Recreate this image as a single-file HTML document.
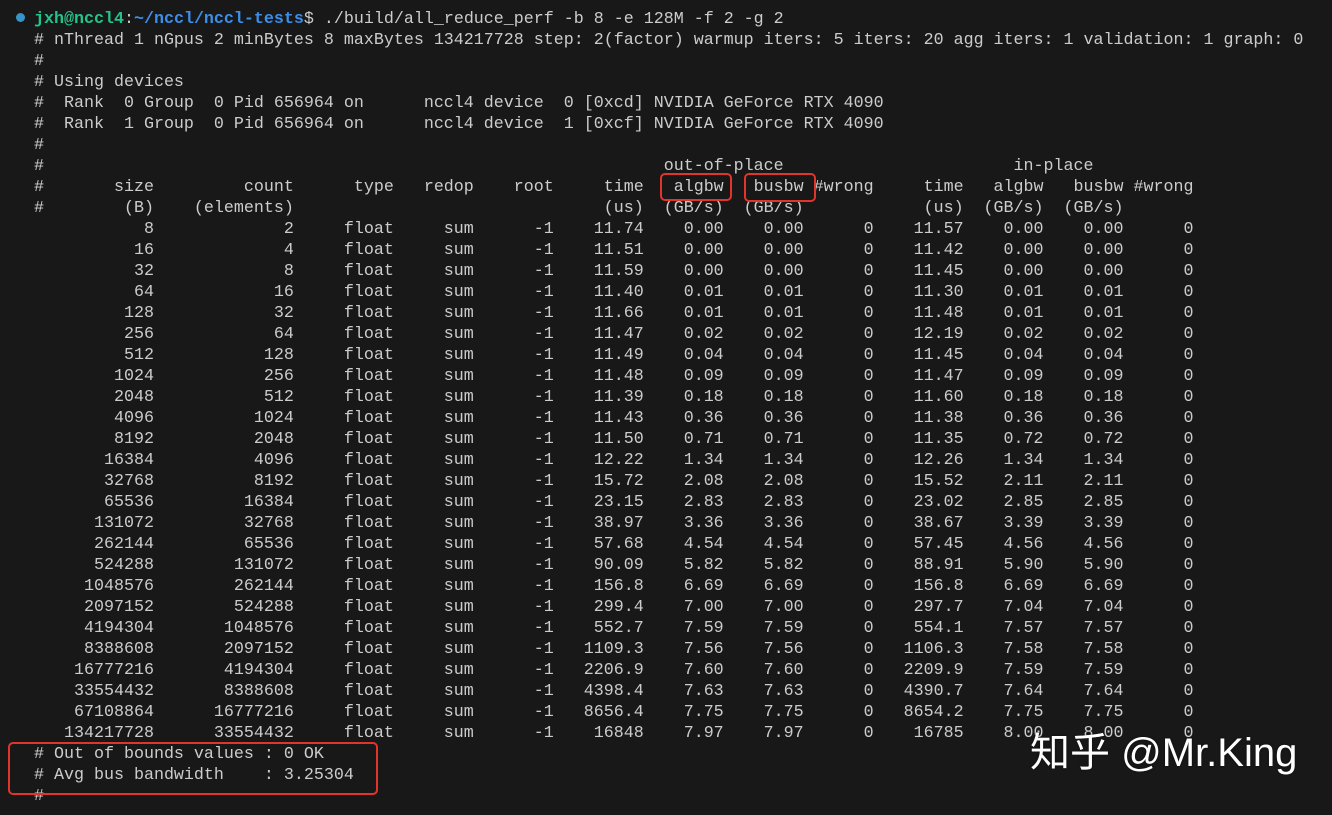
<!DOCTYPE html>
<html><head><meta charset="utf-8"><style>
html,body{margin:0;padding:0;background:#181818;width:1332px;height:815px;overflow:hidden;position:relative}
pre{position:absolute;left:34px;top:9px;margin:0;font-family:"Liberation Mono",monospace;font-size:16.67px;line-height:21px;color:#cccccc;white-space:pre}
.g{color:#23c48a;font-weight:bold}.b{color:#3b8eea;font-weight:bold}
.dot{position:absolute;left:16px;top:13px;width:9px;height:9px;border-radius:50%;background:#3794c8}
.box{position:absolute;border:2px solid #e0352b;border-radius:5px}
.wm{position:absolute;left:1030px;top:720px;font-family:"Liberation Sans","Noto Sans CJK SC",sans-serif;font-size:40px;color:#fff;white-space:nowrap;text-shadow:0 0 2px rgba(0,0,0,.5)}
</style></head><body>
<div class="dot"></div>
<pre><span class="g">jxh@nccl4</span>:<span class="b">~/nccl/nccl-tests</span>$ ./build/all_reduce_perf -b 8 -e 128M -f 2 -g 2
# nThread 1 nGpus 2 minBytes 8 maxBytes 134217728 step: 2(factor) warmup iters: 5 iters: 20 agg iters: 1 validation: 1 graph: 0
#
# Using devices
#  Rank  0 Group  0 Pid 656964 on      nccl4 device  0 [0xcd] NVIDIA GeForce RTX 4090
#  Rank  1 Group  0 Pid 656964 on      nccl4 device  1 [0xcf] NVIDIA GeForce RTX 4090
#
#                                                              out-of-place                       in-place
#       size         count      type   redop    root     time   algbw   busbw #wrong     time   algbw   busbw #wrong
#        (B)    (elements)                               (us)  (GB/s)  (GB/s)            (us)  (GB/s)  (GB/s)
           8             2     float     sum      -1    11.74    0.00    0.00      0    11.57    0.00    0.00      0
          16             4     float     sum      -1    11.51    0.00    0.00      0    11.42    0.00    0.00      0
          32             8     float     sum      -1    11.59    0.00    0.00      0    11.45    0.00    0.00      0
          64            16     float     sum      -1    11.40    0.01    0.01      0    11.30    0.01    0.01      0
         128            32     float     sum      -1    11.66    0.01    0.01      0    11.48    0.01    0.01      0
         256            64     float     sum      -1    11.47    0.02    0.02      0    12.19    0.02    0.02      0
         512           128     float     sum      -1    11.49    0.04    0.04      0    11.45    0.04    0.04      0
        1024           256     float     sum      -1    11.48    0.09    0.09      0    11.47    0.09    0.09      0
        2048           512     float     sum      -1    11.39    0.18    0.18      0    11.60    0.18    0.18      0
        4096          1024     float     sum      -1    11.43    0.36    0.36      0    11.38    0.36    0.36      0
        8192          2048     float     sum      -1    11.50    0.71    0.71      0    11.35    0.72    0.72      0
       16384          4096     float     sum      -1    12.22    1.34    1.34      0    12.26    1.34    1.34      0
       32768          8192     float     sum      -1    15.72    2.08    2.08      0    15.52    2.11    2.11      0
       65536         16384     float     sum      -1    23.15    2.83    2.83      0    23.02    2.85    2.85      0
      131072         32768     float     sum      -1    38.97    3.36    3.36      0    38.67    3.39    3.39      0
      262144         65536     float     sum      -1    57.68    4.54    4.54      0    57.45    4.56    4.56      0
      524288        131072     float     sum      -1    90.09    5.82    5.82      0    88.91    5.90    5.90      0
     1048576        262144     float     sum      -1    156.8    6.69    6.69      0    156.8    6.69    6.69      0
     2097152        524288     float     sum      -1    299.4    7.00    7.00      0    297.7    7.04    7.04      0
     4194304       1048576     float     sum      -1    552.7    7.59    7.59      0    554.1    7.57    7.57      0
     8388608       2097152     float     sum      -1   1109.3    7.56    7.56      0   1106.3    7.58    7.58      0
    16777216       4194304     float     sum      -1   2206.9    7.60    7.60      0   2209.9    7.59    7.59      0
    33554432       8388608     float     sum      -1   4398.4    7.63    7.63      0   4390.7    7.64    7.64      0
    67108864      16777216     float     sum      -1   8656.4    7.75    7.75      0   8654.2    7.75    7.75      0
   134217728      33554432     float     sum      -1    16848    7.97    7.97      0    16785    8.00    8.00      0
# Out of bounds values : 0 OK
# Avg bus bandwidth    : 3.25304
#</pre>
<div class="box" style="left:660px;top:173px;width:68px;height:24px"></div>
<div class="box" style="left:744px;top:173px;width:68px;height:25px"></div>
<div class="box" style="left:8px;top:742px;width:366px;height:49px"></div>
<div class="wm">知乎 @Mr.King</div>
</body></html>
